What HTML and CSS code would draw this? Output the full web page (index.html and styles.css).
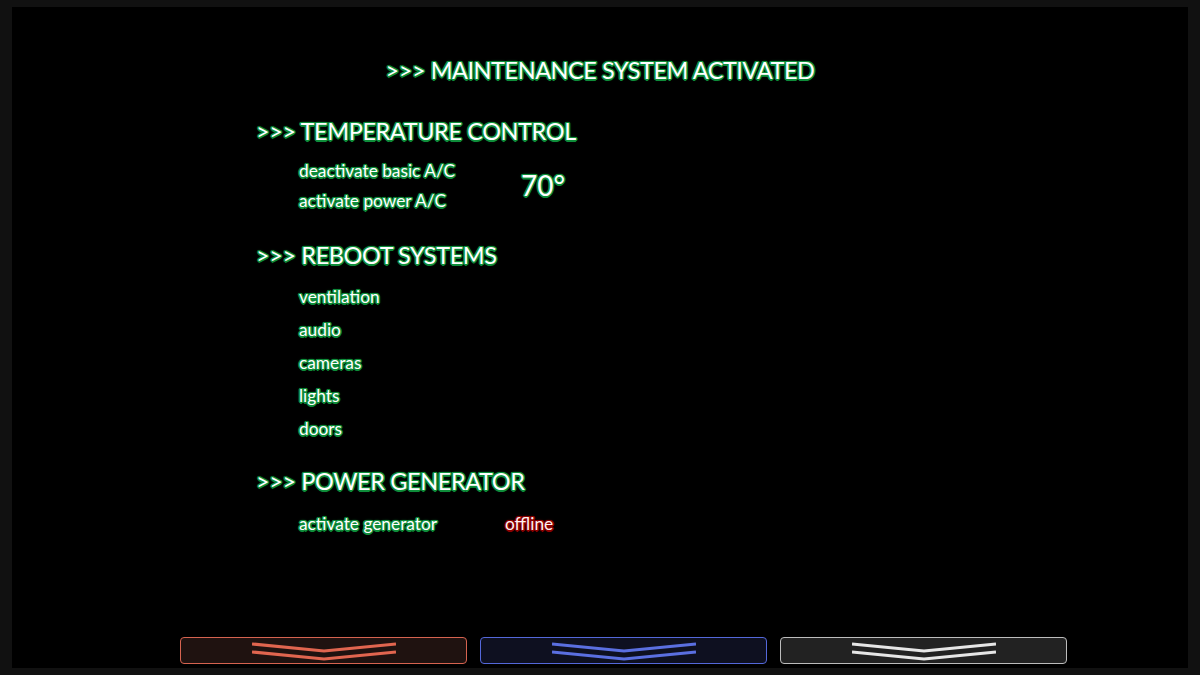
FILE: index.html
```html
<!DOCTYPE html>
<html>
<head>
<meta charset="utf-8">
<link rel="stylesheet" href="styles.css">
</head>
<body>
<div class="screen">
  <main class="content">
    <h1 class="title glow">&gt;&gt;&gt; MAINTENANCE SYSTEM ACTIVATED</h1>

    <section class="section sec-temp">
      <h2 class="heading glow">&gt;&gt;&gt; TEMPERATURE CONTROL</h2>
      <div class="temp-row">
        <ul class="list list-temp">
          <li class="glow">deactivate basic A/C</li>
          <li class="glow">activate power A/C</li>
        </ul>
        <div class="temp glow">70°</div>
      </div>
    </section>

    <section class="section sec-reboot">
      <h2 class="heading glow">&gt;&gt;&gt; REBOOT SYSTEMS</h2>
      <ul class="list list-reboot">
        <li class="glow">ventilation</li>
        <li class="glow">audio</li>
        <li class="glow">cameras</li>
        <li class="glow">lights</li>
        <li class="glow">doors</li>
      </ul>
    </section>

    <section class="section sec-power">
      <h2 class="heading glow">&gt;&gt;&gt; POWER GENERATOR</h2>
      <div class="gen-row">
        <span class="gen-label glow">activate generator</span>
        <span class="status glow-red">offline</span>
      </div>
    </section>
  </main>

  <footer class="tabs">
    <button class="tab tab-red"><svg class="chev" viewBox="0 0 144 20"><path d="M0 3 L72 10 L144 3 M0 11 L72 18 L144 11"/></svg></button>
    <button class="tab tab-blue"><svg class="chev" viewBox="0 0 144 20"><path d="M0 3 L72 10 L144 3 M0 11 L72 18 L144 11"/></svg></button>
    <button class="tab tab-gray"><svg class="chev" viewBox="0 0 144 20"><path d="M0 3 L72 10 L144 3 M0 11 L72 18 L144 11"/></svg></button>
  </footer>
</div>
</body>
</html>
```

FILE: styles.css
```css
html, body {
  margin: 0;
  padding: 0;
  background: #111111;
  width: 1200px;
  height: 675px;
  overflow: hidden;
}

.screen {
  margin: 7px 12px 0 12px;
  width: 1176px;
  height: 661px;
  background: #000;
  display: flex;
  flex-direction: column;
  font-family: Lato, "Noto Sans", sans-serif;
  color: #ffffff;
}

.content {
  flex: 1;
  padding-top: 48px;
}

.glow {
  color: #ffffff;
  text-shadow:
    1.5px 0 0 #0e8c3a, -1.5px 0 0 #0e8c3a, 0 1.5px 0 #0e8c3a, 0 -1.5px 0 #0e8c3a,
    1.1px 1.1px 0 #0e8c3a, -1.1px -1.1px 0 #0e8c3a, 1.1px -1.1px 0 #0e8c3a, -1.1px 1.1px 0 #0e8c3a,
    0 0 3px #0e8c3a, 0 0 2px #0e8c3a;
}

.glow-red {
  color: #fff0f0;
  text-shadow:
    1.5px 0 0 #8a0000, -1.5px 0 0 #8a0000, 0 1.5px 0 #8a0000, 0 -1.5px 0 #8a0000,
    1.1px 1.1px 0 #8a0000, -1.1px -1.1px 0 #8a0000, 1.1px -1.1px 0 #8a0000, -1.1px 1.1px 0 #8a0000,
    0 0 3px #8a0000, 0 0 2px #8a0000;
}

.title {
  margin: 0;
  text-align: center;
  font-size: 23.5px;
  font-weight: 400;
  line-height: 30px;
  letter-spacing: -0.45px;
}

.section {
  padding-left: 244px;
}

.heading {
  margin: 0;
  font-size: 23.5px;
  font-weight: 400;
  line-height: 30px;
  letter-spacing: -0.4px;
}

.sec-temp { margin-top: 31px; }
.sec-reboot { margin-top: 24px; }
.sec-power { margin-top: 21px; }

.list {
  list-style: none;
  margin: 0;
  padding: 0 0 0 43px;
  font-size: 17.3px;
}

.list li {
  line-height: 30px;
}

.temp-row {
  margin-top: 10px;
  display: flex;
  align-items: center;
}

.list-temp {
  width: 222px;
}

.temp {
  font-size: 28px;
  line-height: 34px;
  padding-bottom: 2px;
}

.list-reboot {
  margin-top: 10px;
}

.list-reboot li {
  line-height: 33px;
}

.gen-row {
  margin-top: 13px;
  padding-left: 43px;
  font-size: 17.3px;
  line-height: 30px;
  display: flex;
}

.gen-label {
  width: 206px;
}

.tabs {
  display: flex;
  gap: 13px;
  padding-left: 168px;
  padding-bottom: 4px;
}

.tab {
  width: 287px;
  height: 27px;
  border-radius: 4px;
  border: 1.5px solid;
  padding: 0;
  margin: 0;
  display: flex;
  align-items: center;
  justify-content: center;
  box-sizing: border-box;
}

.chev {
  width: 144px;
  height: 20px;
  fill: none;
  stroke-width: 3.2;
}

.tab-red { background: #1f1210; border-color: #d66350; }
.tab-red .chev { stroke: #e0654f; }
.tab-blue { background: #0e1020; border-color: #5468da; }
.tab-blue .chev { stroke: #5a6fe0; }
.tab-gray { background: #222222; border-color: #bdbdbd; }
.tab-gray .chev { stroke: #e6e6e6; }
```
